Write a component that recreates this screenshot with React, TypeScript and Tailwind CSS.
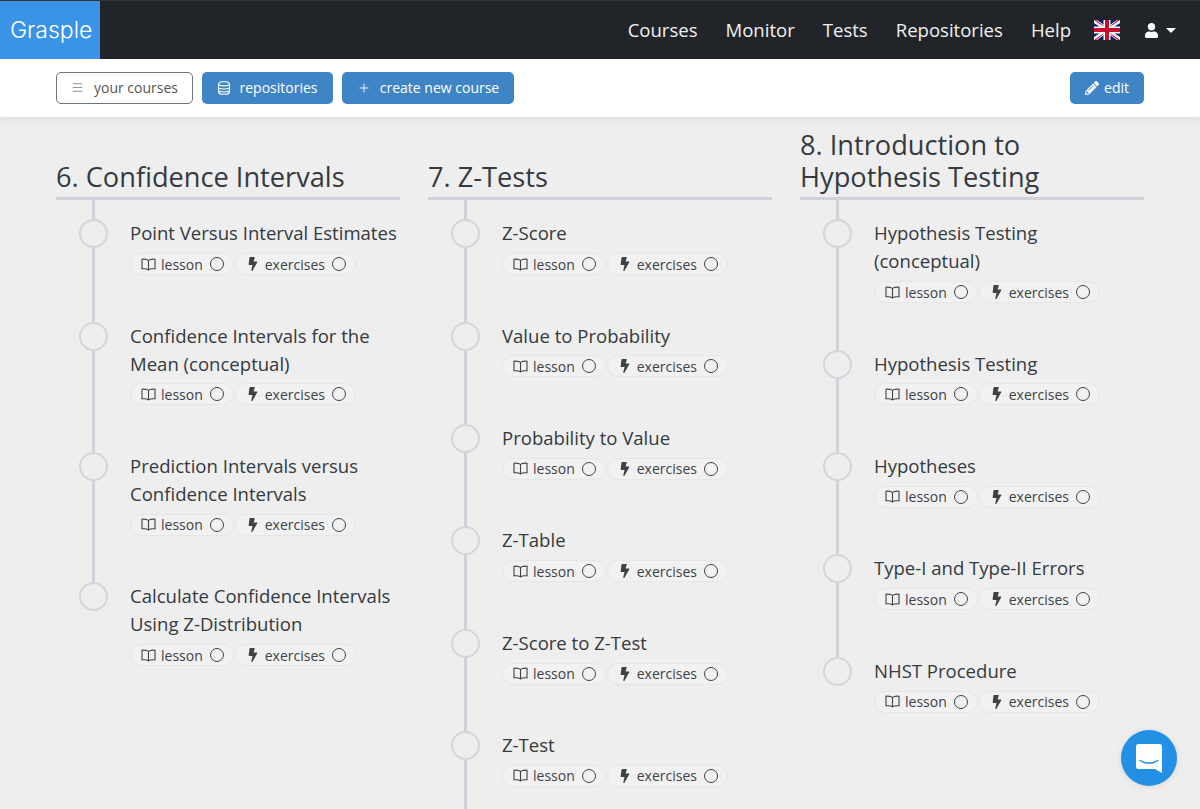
import React from "react";
import { Menu, Plus } from "lucide-react";
import { FaBolt, FaPencilAlt, FaUser } from "react-icons/fa";

const columns = [
  {
    title: "6. Confidence Intervals",
    items: [
      "Point Versus Interval Estimates",
      "Confidence Intervals for the Mean (conceptual)",
      "Prediction Intervals versus Confidence Intervals",
      "Calculate Confidence Intervals Using Z-Distribution",
    ],
    open: false,
  },
  {
    title: "7. Z-Tests",
    items: ["Z-Score", "Value to Probability", "Probability to Value", "Z-Table", "Z-Score to Z-Test", "Z-Test"],
    open: true,
  },
  {
    title: "8. Introduction to Hypothesis Testing",
    items: [
      "Hypothesis Testing (conceptual)",
      "Hypothesis Testing",
      "Hypotheses",
      "Type-I and Type-II Errors",
      "NHST Procedure",
    ],
    open: false,
  },
];

const Flag = () => (
  <svg width="26" height="20" viewBox="0 0 26 20" className="block">
    <rect width="26" height="20" fill="#fff" />
    <path d="M0 0 L26 20 M26 0 L0 20" stroke="#c8102e" strokeWidth="2.5" />
    <path d="M0 0 L10 7 H7 L0 2Z M26 0 V2 L19 7 H16Z M0 20 V18 L7 13 H10Z M26 20 L16 13 H19 L26 18Z" fill="#fff" />
    <path d="M3 0 H10 V5Z M16 0 H23 L16 5Z M0 3 L6 7 H0Z M26 3 V7 H20Z M0 13 H6 L0 17Z M20 13 H26 V17Z M10 20 H3 L10 15Z M16 20 V15 L23 20Z" fill="#012169" />
    <path d="M13 0 V20 M0 10 H26" stroke="#fff" strokeWidth="7" />
    <path d="M13 0 V20 M0 10 H26" stroke="#c8102e" strokeWidth="4" />
  </svg>
);

const Book = () => (
  <svg width="15" height="13" viewBox="0 0 15 13" fill="none" stroke="currentColor" strokeWidth="1.1" className="mr-[5px]">
    <path d="M7.500 2.500 C6.500 1.300 4 1 1 1.200 V10.800 C4 10.600 6.500 10.900 7.500 12 C8.500 10.900 11 10.600 14 10.800 V1.200 C11 1 8.500 1.300 7.500 2.500 V12" />
  </svg>
);

const Db = () => (
  <svg width="12" height="14" viewBox="0 0 12 14" fill="none" stroke="currentColor" strokeWidth="1.1" className="mr-[10px]">
    <rect x="0.600" y="0.800" width="10.800" height="12.400" rx="3" />
    <path d="M0.600 3.800 C3 5.200 9 5.200 11.400 3.800 M0.600 7 C3 8.400 9 8.400 11.400 7 M0.600 10 C3 11.400 9 11.400 11.400 10" />
  </svg>
);

const Chip = ({ icon, label }: { icon: React.ReactNode; label: string }) => (
  <div className="flex h-[22px] items-center rounded-full border border-[#e6e6e6] bg-[#f1f1f1] pl-[10px] pr-[9px] text-[14px] text-[#3d4246]">
    {icon}
    <span>{label}</span>
    <span className="ml-[7px] h-[14px] w-[14px] rounded-full border-[1.5px] border-[#3d4246]" />
  </div>
);

const Lesson = ({ title, last }: { title: string; last: boolean }) => (
  <div className="flex">
    <div className="flex w-[74px] flex-none flex-col items-center">
      <div className="h-[19px] w-[3px] bg-[#cfd3d9]" />
      <div className="h-[29px] w-[29px] flex-none rounded-full border-2 border-[#d3d6da] bg-[#eeeeee]" />
      {!last && <div className="w-[3px] flex-1 bg-[#cfd3d9]" />}
    </div>
    <div className="min-w-0 flex-1 pb-[29.3px] pt-[19px]">
      <div className="text-[18.56px] leading-[28px] text-[#343a40]">{title}</div>
      <div className="mt-[7.7px] flex h-[18.4px] items-center gap-px">
        <Chip icon={<Book />} label="lesson" />
        <Chip icon={<FaBolt size={14} className="mr-[5px]" />} label="exercises" />
      </div>
    </div>
  </div>
);

export default function App() {
  return (
    <div className="relative h-[809px] overflow-hidden bg-[#eeeeee] font-['Open_Sans',sans-serif]">
      <header className="flex h-[59px] items-center border-t border-[#333] bg-[#212529] pr-[24px] text-[18.56px] text-[#f1f1f1]">
        <div className="flex h-full w-[100px] items-center bg-[#3b93e8] pl-[10px] font-['Inter',sans-serif] text-[23px] font-light text-white">
          Grasple
        </div>
        <nav className="ml-auto flex items-center">
          <span>Courses</span>
          <span className="ml-[28px]">Monitor</span>
          <span className="ml-[28px]">Tests</span>
          <span className="ml-[28px]">Repositories</span>
          <span className="ml-[28px]">Help</span>
          <span className="ml-[23px]"><Flag /></span>
          <FaUser size={15} className="ml-[24px] text-white" />
          <span className="ml-[7px] h-0 w-0 border-x-[5px] border-t-[5px] border-x-transparent border-t-white" />
        </nav>
      </header>

      <div className="flex h-[58px] items-center bg-white pl-[56px] pr-[56px] text-[14px] font-medium shadow-[0_2px_6px_rgba(0,0,0,0.08)]">
        <button className="flex h-[32px] w-[137px] items-center justify-center rounded-[5px] border border-[#6c757d] bg-white pb-[1px] text-[#555]">
          <Menu size={13} strokeWidth={1.5} className="mr-[10px] text-[#777]" />
          your courses
        </button>
        <button className="ml-[9px] flex h-[32px] w-[131px] items-center justify-center rounded-[5px] bg-[#3f85c5] pb-[1px] text-white">
          <Db />
          repositories
        </button>
        <button className="ml-[9px] flex h-[32px] w-[172px] items-center justify-center rounded-[5px] bg-[#3f85c5] pb-[1px] text-white">
          <Plus size={14} strokeWidth={1.5} className="mr-[9px]" />
          create new course
        </button>
        <button className="ml-auto flex h-[32px] w-[74px] items-center justify-center rounded-[5px] bg-[#3f85c5] pb-[1px] text-white">
          <FaPencilAlt size={14} className="mr-[5px]" />
          edit
        </button>
      </div>

      <main className="grid grid-cols-3 gap-x-[28px] px-[56px] pt-[11.2px]">
        {columns.map((col) => (
          <section key={col.title}>
            <h2 className="flex h-[72px] items-end border-b-[3px] border-[#cfd3d9] pb-[4px] text-[27.2px] leading-[32px] text-[#343a40]">
              <span>{col.title}</span>
            </h2>
            <div>
              {col.items.map((item, i) => (
                <Lesson key={item} title={item} last={!col.open && i === col.items.length - 1} />
              ))}
            </div>
          </section>
        ))}
      </main>

      <div className="absolute left-[1121px] top-[730px] flex h-[56px] w-[56px] items-center justify-center rounded-full bg-[#2490e3] shadow-[0_1px_6px_rgba(0,0,0,0.1)]">
        <svg width="26" height="29" viewBox="0 0 26 29">
          <path d="M2.500 0 H23.500 a2.500 2.500 0 0 1 2.500 2.500 V29 L19 25 H2.500 a2.500 2.500 0 0 1 -2.500 -2.500 V2.500 A2.500 2.500 0 0 1 2.500 0Z" fill="#fff" />
          <path d="M4 16.500 C9 20 17 20 22 16.500" fill="none" stroke="#2490e3" strokeWidth="1.500" strokeLinecap="round" />
        </svg>
      </div>
    </div>
  );
}
